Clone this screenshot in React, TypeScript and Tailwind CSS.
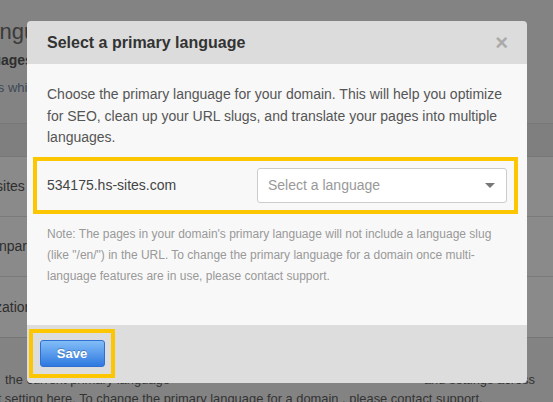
export default function App() {
    return (
        <div className="relative h-[402px] w-[553px] overflow-hidden bg-[#838383] font-['Liberation_Sans',Arial,sans-serif] text-[#2e2e2e]">
            {/* page behind the dimmed overlay */}
            <div className="flex flex-col">
                <div className="h-[18px]" />
                <div className="-ml-[25px] whitespace-nowrap text-[22px] leading-[28px] text-[#3a3a3a]">Language Settings</div>
                <div className="-ml-[41px] mt-[4px] whitespace-nowrap text-[14px] font-bold leading-[20px]">Languages</div>
                <div className="-ml-[60px] mt-[8px] whitespace-nowrap text-[13px] leading-[20px] text-[#3c4a57]">Languages which are used</div>
                <div className="mt-[25px] h-[34px] border-y border-[#777] bg-[#7f7f7f]" />
                <div className="flex h-[60px] items-center border-b border-[#7a7a7a] bg-[#8a8a8a]">
                    <span className="-ml-[74px] whitespace-nowrap text-[14px]">534175.hs-sites</span>
                </div>
                <div className="flex h-[60px] items-center border-b border-[#7a7a7a] bg-[#8a8a8a]">
                    <span className="-ml-[1px] whitespace-nowrap text-[14px]">npart</span>
                </div>
                <div className="flex h-[61px] items-center border-b border-[#767676] bg-[#8a8a8a]">
                    <span className="-ml-[47px] whitespace-nowrap text-[14px]">Organization</span>
                </div>
                <div className="mt-[32px] whitespace-nowrap text-[12.9px] leading-[19px] text-[#333]">
                    <div className="ml-[5px] flex w-[530px] justify-between">
                        <span>the current primary language</span>
                        <span>and settings across</span>
                    </div>
                    <div className="-ml-[31px]">about setting here. To change the primary language for a domain , please contact support.</div>
                </div>
            </div>

            {/* modal */}
            <div className="absolute left-[27px] top-[21px] flex w-[500px] flex-col overflow-hidden rounded-[4px]">
                <div className="flex h-[43px] items-center justify-between bg-[#dcdcdc] pl-[20px] pr-[19px]">
                    <h3 className="text-[16px] font-bold text-[#333]">Select a primary language</h3>
                    <span className="text-[22px] font-bold leading-none text-[#aaa]">×</span>
                </div>
                <div className="flex h-[261px] flex-col bg-[#f8f8f8]">
                    <p className="px-[20px] pt-[20px] text-[14px] leading-[21.5px] text-[#555]">
                        Choose the primary language for your domain. This will help you optimize for SEO, clean up your URL slugs, and translate your pages into multiple languages.
                    </p>
                    <div className="ml-[6px] mr-[9px] mt-[8px] flex h-[57px] items-center justify-between border-[4px] border-[#fcc600] pl-[10px] pr-[7px]">
                        <span className="text-[14px] text-[#444]">534175.hs-sites.com</span>
                        <div className="flex h-[35px] w-[250px] items-center justify-between rounded-[3px] border border-[#cccccc] bg-white pl-[10px] pr-[11px]">
                            <span className="text-[14px] text-[#999]">Select a language</span>
                            <span className="h-0 w-0 border-x-[5px] border-t-[5px] border-x-transparent border-t-[#777]" />
                        </div>
                    </div>
                    <p className="mt-[10px] px-[20px] text-[12px] leading-[21px] text-[#999]">
                        Note: The pages in your domain's primary language will not include a language slug (like "/en/") in the URL. To change the primary language for a domain once multi-language features are in use, please contact support.
                    </p>
                </div>
                <div className="flex h-[58px] items-start bg-[#dddddd] pl-[2px] pt-[4px]">
                    <div className="flex h-[49px] w-[86px] items-center justify-center border-[4px] border-[#fcc600]">
                        <button className="h-[27px] w-[65px] rounded-[3px] border border-[#2f6fd2] bg-gradient-to-b from-[#82bdf7] to-[#2e79e0] text-[13px] font-bold text-white [text-shadow:0_-1px_0_rgba(0,0,0,0.25)]">
                            Save
                        </button>
                    </div>
                </div>
            </div>
        </div>
    );
}
